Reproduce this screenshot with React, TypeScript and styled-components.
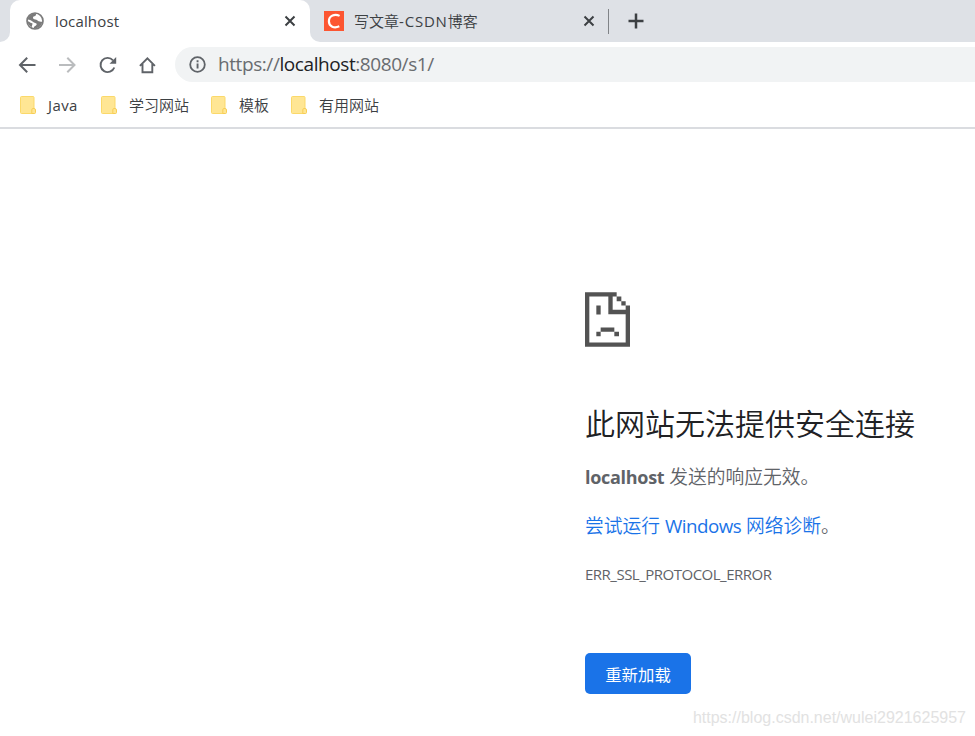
import React from "react";
import styled, { createGlobalStyle } from "styled-components";

const GlobalStyle = createGlobalStyle`
  * { box-sizing: border-box; }
  html, body { margin: 0; padding: 0; background: #fff; overflow: hidden; }
  body { font-family: "Open Sans", "Noto Sans CJK SC", sans-serif; }
  svg { display: block; flex: none; }
`;

const Window = styled.div`
  position: relative;
  width: 975px;
  height: 736px;
  overflow: hidden;
  background: #fff;
  display: flex;
  flex-direction: column;
`;

const TabStrip = styled.header`
  height: 42px;
  background: #dee1e6;
  display: flex;
  align-items: center;
`;

const StripEdge = styled.div<{ $side: "left" | "right" }>`
  width: 10px;
  height: 42px;
  background: #fff;
  &::before {
    content: "";
    display: block;
    height: 42px;
    background: #dee1e6;
    border-bottom-${(p) => (p.$side === "left" ? "right" : "left")}-radius: 10px;
  }
`;

const Tab = styled.div<{ $active?: boolean }>`
  width: ${(p) => (p.$active ? 300 : 288)}px;
  height: 42px;
  padding: 0 ${(p) => (p.$active ? 13 : 12)}px 0 ${(p) => (p.$active ? 16 : 4)}px;
  display: flex;
  align-items: center;
  gap: ${(p) => (p.$active ? 11 : 10)}px;
  background: ${(p) => (p.$active ? "#fff" : "#dee1e6")};
  border-radius: ${(p) => (p.$active ? "10px 10px 0 0" : "0")};
`;

const TabTitle = styled.span`
  flex: 1;
  color: #3c4043;
  font-size: 15px;
  line-height: 20px;
  font-weight: 350;
  white-space: nowrap;
`;

const Latin = styled.span<{ $spacing?: number }>`
  font-weight: 400;
  letter-spacing: ${(p) => p.$spacing ?? 0}px;
`;

const Divider = styled.div`
  width: 1px;
  height: 25px;
  margin: 0 19px 0 0;
  background: #808387;
`;

const Toolbar = styled.div`
  height: 45px;
  display: flex;
  align-items: center;
  padding-left: 17px;
`;

const NavButtons = styled.nav`
  display: flex;
  gap: 20px;
  width: 158px;
`;

const AddressBar = styled.div`
  flex: 1;
  height: 35px;
  border-radius: 18px 0 0 18px;
  background: #f1f3f4;
  display: flex;
  align-items: center;
  padding-left: 14px;
`;

const Url = styled.span`
  margin: 0 0 1px 12px;
  color: #696c70;
  font-size: 19px;
  line-height: 28px;
  letter-spacing: -0.42px;
  b { font-weight: 400; color: #202124; }
`;

const Bookmarks = styled.div`
  height: 42px;
  display: flex;
  padding: 0 0 4px 20px;
  align-items: center;
  border-bottom: 2px solid #dadce0;
`;

const Bookmark = styled.div<{ $width: number }>`
  width: ${(p) => p.$width}px;
  display: flex;
  align-items: center;
  gap: 12px;
  color: #3c4043;
  font-size: 15px;
  line-height: 20px;
  font-weight: 350;
  white-space: nowrap;
`;

const ErrorPage = styled.main`
  padding: 163px 0 0 585px;
  display: flex;
  flex-direction: column;
  align-items: flex-start;
  color: #5f6368;
  white-space: nowrap;
`;

const Heading = styled.h1`
  margin: 55px 0 0;
  color: #202124;
  font-size: 30px;
  line-height: 44px;
  font-weight: 350;
`;

const Paragraph = styled.p<{ $top: number }>`
  margin: ${(p) => p.$top}px 0 0;
  font-size: 18.75px;
  line-height: 28px;
  font-weight: 350;
  strong { font-weight: 700; font-size: 18px; letter-spacing: -0.3px; }
`;

const DiagnosticsLink = styled.a`
  color: #1a73e8;
`;

const ErrorCode = styled.div`
  margin-top: 23px;
  font-size: 15px;
  line-height: 22px;
  letter-spacing: -0.5px;
`;

const ReloadButton = styled.button`
  margin: 68px 0 0;
  width: 106px;
  height: 41px;
  padding: 0;
  border: 0;
  border-radius: 5px;
  background: #1a73e8;
  color: #fff;
  font: 400 16.4px "Noto Sans CJK SC", sans-serif;
`;

const Watermark = styled.div`
  position: absolute;
  right: 9px;
  bottom: 8px;
  color: #e2e2e2;
  font: 16px/20px "Liberation Sans", sans-serif;
`;

const GlobeIcon = () => (
  <svg width="18" height="18" viewBox="0 0 54 54">
    <circle cx="27" cy="27" r="24" fill="#fff" stroke="#7b7b7b" strokeWidth="5" />
    <path d="M5 22C9 10 18 3 30 4C31 9 29 12 25 13C21 14 20 17 22 20C25 23 31 21 34 25C37 29 42 30 49 29C47 41 37 49 24 50C23 45 24 43 29 41C34 38 33 34 28 33C22 32 19 27 14 25C11 23 8 24 5 22Z" fill="#7b7b7b" />
    <path d="M4 27C10 29 13 33 19 34C21 37 17 39 18 45C10 42 5 36 4 27Z" fill="#7b7b7b" />
  </svg>
);

const CsdnIcon = () => (
  <svg width="20" height="20" viewBox="0 0 20 20">
    <path d="M0 0h20v20H0z" fill="#fc5531" />
    <path d="M15.600 4.900C11 2.400 4.900 4.400 4.900 10.300c0 5.400 5.400 7.300 10.400 5" fill="none" stroke="#fff" strokeWidth="2.200" />
  </svg>
);

const CloseIcon = () => (
  <svg width="14" height="14" viewBox="0 0 14 14">
    <path d="M2.500 2.500l9 9M11.500 2.500l-9 9" stroke="#3c4043" strokeWidth="2" />
  </svg>
);

const PlusIcon = () => (
  <svg width="16" height="16" viewBox="0 0 16 16">
    <path d="M8 .5v15M.5 8h15" stroke="#3c4043" strokeWidth="2.500" />
  </svg>
);

const ArrowIcon = ({ forward = false }: { forward?: boolean }) => (
  <svg width="20" height="20" viewBox="0 0 20 20" fill="none" stroke={forward ? "#babcbe" : "#5f6368"} strokeWidth="2">
    <path d={forward ? "M2 10h15M10.300 2.700L17.500 10l-7.200 7.300" : "M18.500 10H3.500M10.200 2.700L3 10l7.200 7.300"} />
  </svg>
);

const ReloadIcon = () => (
  <svg width="20" height="20" viewBox="0 0 20 20">
    <path d="M17.300 12.500A7.100 7.100 0 1 1 16 5.300" fill="none" stroke="#5f6368" strokeWidth="1.900" />
    <path d="M19.200 2v6.700h-6.700z" fill="#5f6368" />
  </svg>
);

const HomeIcon = () => (
  <svg width="20" height="20" viewBox="0 0 20 20">
    <path d="M2.900 10.800L10.400 3.300l7.500 7.500M5.500 9v8.200h9.800V9" fill="none" stroke="#5f6368" strokeWidth="1.900" />
  </svg>
);

const InfoIcon = () => (
  <svg width="17" height="17" viewBox="0 0 17 17">
    <circle cx="8.500" cy="8.500" r="7.300" fill="none" stroke="#5f6368" strokeWidth="1.800" />
    <path d="M7.600 7.600h1.900v5H7.600zM7.600 4.300h1.900v1.900H7.600z" fill="#5f6368" />
  </svg>
);

const FolderIcon = () => (
  <svg width="16" height="18" viewBox="0 0 16 18">
    <path d="M1.500.5h11.500q1 0 1 1V17.500H1.500q-1 0-1-1v-15q0-1 1-1z" fill="#ffe694" stroke="#fbd96a" />
    <path d="M14 12.500h-1.200q-1 0-1 1.500v3.500h2.700q1 0 1-1V14q0-1.500-1.500-1.500z" fill="#ffe694" stroke="#f7ce55" />
  </svg>
);

const SadPageIcon = () => (
  <svg width="45" height="55" viewBox="0 0 135 164" fill="#535353">
    <path d="M0 0H95V13H109V27H122V40H135V164H0ZM13 13V151H122V66H70V13ZM83 13V53H122V40H109V27H95V13Z" fillRule="evenodd" />
    <path d="M34 40h13v27H34zM47 106h41v13H47zM34 119h13v13H34zM88 119h14v13H88z" />
  </svg>
);

const bookmarks = [
  { label: <Latin $spacing={0.4}>Java</Latin>, width: 81 },
  { label: "学习网站", width: 110 },
  { label: "模板", width: 80 },
  { label: "有用网站", width: 110 },
];

export default function App() {
  return (
    <Window>
      <GlobalStyle />
      <TabStrip>
        <StripEdge $side="left" />
        <Tab $active>
          <GlobeIcon />
          <TabTitle>
            <Latin $spacing={0.15}>localhost</Latin>
          </TabTitle>
          <CloseIcon />
        </Tab>
        <StripEdge $side="right" />
        <Tab>
          <CsdnIcon />
          <TabTitle>
            写文章<Latin $spacing={0.8}>-CSDN</Latin>博客
          </TabTitle>
          <CloseIcon />
        </Tab>
        <Divider />
        <PlusIcon />
      </TabStrip>
      <Toolbar>
        <NavButtons>
          <ArrowIcon />
          <ArrowIcon forward />
          <ReloadIcon />
          <HomeIcon />
        </NavButtons>
        <AddressBar>
          <InfoIcon />
          <Url>https://<b>localhost</b>:8080/s1/</Url>
        </AddressBar>
      </Toolbar>
      <Bookmarks>
        {bookmarks.map((item, index) => (
          <Bookmark key={index} $width={item.width}>
            <FolderIcon />
            {item.label}
          </Bookmark>
        ))}
      </Bookmarks>
      <ErrorPage>
        <SadPageIcon />
        <Heading>此网站无法提供安全连接</Heading>
        <Paragraph $top={17}>
          <strong>localhost</strong> 发送的响应无效。
        </Paragraph>
        <Paragraph $top={21}>
          <DiagnosticsLink>
            尝试运行 <Latin $spacing={-0.5}>Windows</Latin> 网络诊断
          </DiagnosticsLink>
          。
        </Paragraph>
        <ErrorCode>ERR_SSL_PROTOCOL_ERROR</ErrorCode>
        <ReloadButton>重新加载</ReloadButton>
      </ErrorPage>
      <Watermark>https://blog.csdn.net/wulei2921625957</Watermark>
    </Window>
  );
}
